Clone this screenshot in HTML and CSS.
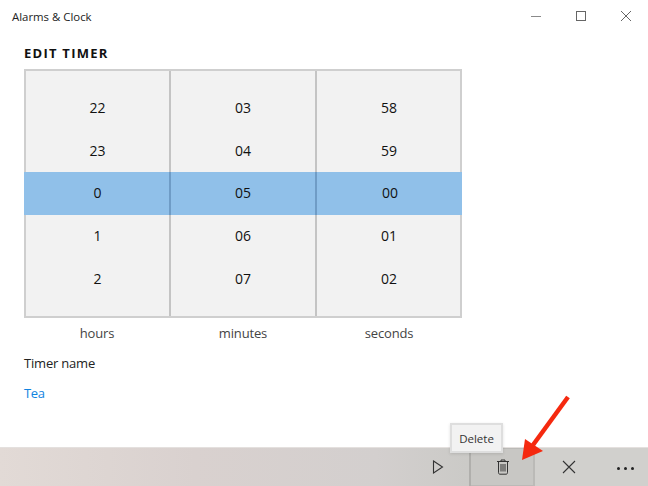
FILE: index.html
```html
<!DOCTYPE html>
<html lang="en">
<head>
<meta charset="utf-8">
<title>Alarms &amp; Clock</title>
<link rel="stylesheet" href="styles.css">
</head>
<body>
<div class="window">
  <header class="titlebar">
    <span class="app-title">Alarms &amp; Clock</span>
    <div class="controls">
      <span class="ctl"><svg width="12" height="12" viewBox="0 0 12 12"><path d="M1 6.5h10" stroke="#8a8a8a" stroke-width="1"/></svg></span>
      <span class="ctl"><svg width="12" height="12" viewBox="0 0 12 12"><rect x="1.5" y="1.5" width="9" height="9" fill="none" stroke="#666" stroke-width="1"/></svg></span>
      <span class="ctl"><svg width="12" height="12" viewBox="0 0 12 12"><path d="M1 1l10 10M11 1L1 11" stroke="#666" stroke-width="1"/></svg></span>
    </div>
  </header>
  <main class="content">
    <h1 class="heading">EDIT TIMER</h1>
    <div class="picker">
      <div class="col col-h">
        <div class="cell">22</div><div class="cell">23</div><div class="cell sel">0</div><div class="cell">1</div><div class="cell">2</div>
      </div>
      <div class="col col-m">
        <div class="cell">03</div><div class="cell">04</div><div class="cell sel">05</div><div class="cell">06</div><div class="cell">07</div>
      </div>
      <div class="col col-s">
        <div class="cell">58</div><div class="cell">59</div><div class="cell sel">00</div><div class="cell">01</div><div class="cell">02</div>
      </div>
    </div>
    <div class="units">
      <span>hours</span><span>minutes</span><span>seconds</span>
    </div>
    <div class="name-label">Timer name</div>
    <div class="name-value">Tea</div>
  </main>
  <footer class="appbar">
    <button class="bar-btn btn-play"><svg width="12" height="14" viewBox="0 0 12 14"><path d="M1.5 1L10.5 7l-9 6z" fill="none" stroke="#333" stroke-width="1.1"/></svg></button>
    <button class="bar-btn btn-del"><svg width="14" height="16" viewBox="0 0 14 16"><path d="M1 2.5h12M5 2.5V1h4v1.5M2.5 2.5v11.2c0 .9.6 1.5 1.5 1.5h6c.9 0 1.5-.6 1.5-1.5V2.5M5 5v7.5M7 5v7.5M9 5v7.5" fill="none" stroke="#333" stroke-width="1"/></svg></button>
    <button class="bar-btn btn-x"><svg width="14" height="14" viewBox="0 0 14 14"><path d="M1 1l12 12M13 1L1 13" stroke="#333" stroke-width="1.1"/></svg></button>
    <button class="bar-btn btn-more"><span class="dot"></span><span class="dot"></span><span class="dot"></span></button>
    <div class="tooltip">Delete</div>
  </footer>
  <svg class="arrow" width="60" height="74" viewBox="0 0 60 74"><path d="M52 3L17 51" stroke="#f5290f" stroke-width="4.5" fill="none"/><path d="M6 66L9 45l18 12z" fill="#f5290f"/></svg>
</div>
</body>
</html>
```

FILE: styles.css
```css
* { box-sizing: border-box; }
html, body { margin: 0; padding: 0; background: #fff; }
body { font-family: "Open Sans", "Noto Sans", sans-serif; color: #1a1a1a; }
.window { position: relative; width: 648px; height: 486px; display: flex; flex-direction: column; overflow: hidden; }
.titlebar { height: 32px; display: flex; align-items: center; justify-content: space-between; padding-left: 12px; }
.app-title { font-size: 11.4px; color: #222; }
.controls { display: flex; }
.ctl { width: 45px; height: 32px; display: flex; align-items: center; justify-content: center; }
.content { flex: 1; padding: 13px 0 0 24px; }
.heading { margin: 0 0 7px; font-size: 13px; line-height: 17px; font-weight: 700; letter-spacing: 1.25px; color: #111; }
.picker { width: 438px; height: 249px; display: grid; grid-template-columns: 145px 146px 143px; border: 2px solid #cfcfcf; background: #f2f2f2; }
.col { display: flex; flex-direction: column; padding: 15.5px 0 0; border-right: 2px solid #c4c4c4; }
.col-s { border-right: 0; text-indent: 1px; }
.cell { flex: none; height: 42.75px; display: flex; align-items: center; justify-content: center; padding-bottom: 1px; font-size: 14px; color: #111; }
.cell.sel { background: #90c0e9; margin-right: -2px; border-right: 2px solid #6f9cc6; }
.col-h .cell.sel { margin-left: -2px; padding-left: 2px; }
.col-s .cell.sel { border-right: 0; }
.units { width: 438px; display: grid; grid-template-columns: 146px 146px 146px; margin-top: 5px; font-size: 13px; letter-spacing: -0.15px; line-height: 20px; color: #444; text-align: center; }
.name-label { margin-top: 10px; font-size: 13px; letter-spacing: -0.2px; line-height: 20px; color: #222; }
.name-value { margin-top: 10px; font-size: 13px; letter-spacing: -0.4px; line-height: 20px; font-weight: 500; color: #1083e0; }
.appbar { position: relative; height: 39px; display: flex; justify-content: flex-end; background: linear-gradient(90deg, #e2dad6 0%, #d9d1cf 30%, #d3cfce 58%, #cbcac7 72%); border-top: 1px solid #e4e0de; }
.bar-btn { height: 38px; border: 0; padding: 0; background: transparent; display: flex; align-items: center; justify-content: center; }
.btn-play { width: 71px; padding-left: 6px; border-right: 2px solid #b0afac; }
.btn-del { width: 64px; padding-left: 2px; background: #c8c7c4; border: 1px solid #bbbab7; border-left: 0; border-right-width: 2px; }
.btn-x { width: 68px; background: #d1d0cd; }
.btn-more { width: 45px; gap: 4px; padding-top: 3px; background: #d1d0cd; }
.dot { width: 3px; height: 3px; background: #222; border-radius: 50%; }
.tooltip { position: absolute; left: 450px; top: -25px; width: 53px; height: 30px; display: flex; align-items: center; justify-content: center; font-size: 11.5px; color: #333; background: #f2f2f2; border: 2px solid #dedede; box-shadow: 0 1px 3px rgba(0,0,0,.12); }
.arrow { position: absolute; left: 516px; top: 394px; }
```
